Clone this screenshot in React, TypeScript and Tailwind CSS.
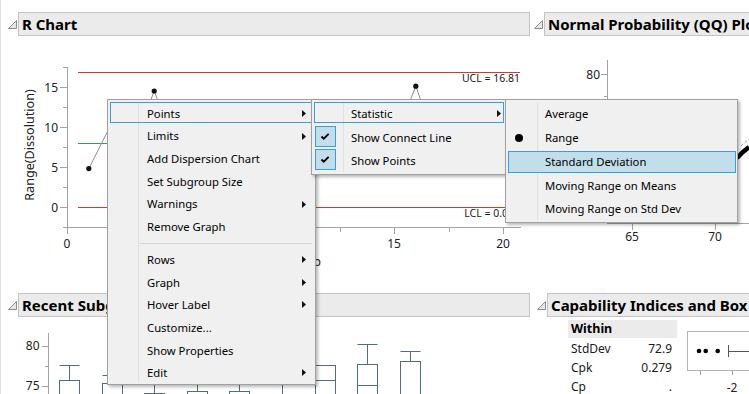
import type { ReactNode } from "react";

// ---------- shared bits ----------

function DisclosureIcon() {
  return (
    <svg width="9" height="9" viewBox="0 0 9 9" className="shrink-0">
      <path d="M0.5 8.5L8.5 0.5V8.5Z" fill="#e6e6e6" stroke="#8e8e8e" />
    </svg>
  );
}

function OutlineHeader({ title, className = "" }: { title: string; className?: string }) {
  return (
    <div className={`flex h-[24px] shrink-0 items-center gap-px ${className}`}>
      <DisclosureIcon />
      <div className="flex h-full min-w-0 flex-1 items-center overflow-hidden whitespace-nowrap border border-[#c4c4c4] bg-[#ebebeb] pl-[3px] text-[15px] font-bold leading-none text-black">
        {title}
      </div>
    </div>
  );
}

// ---------- R chart ----------

const rValues = [4.8, 10.2, 7.1, 14.5, 7.3, 9.1, 6.2, 8.6, 5.8, 7.7, 9.4, 6.5, 8.3, 7.0, 8.1, 15.1, 7.4, 9.2, 6.7, 8.4];
const rx = (i: number) => 67 + i * 21.8;
const ry = (v: number) => 207 - v * 8;

function RChart() {
  const pts = rValues.map((v, i) => [rx(i + 1), ry(v)] as const);
  return (
    <svg width="530" height="257" viewBox="0 36 530 257" className="block text-[12px]">
      <line x1="78" x2="520" y1="72.5" y2="72.5" stroke="#d3382c" />
      <line x1="78" x2="520" y1="143.5" y2="143.5" stroke="#2f9d4b" />
      <line x1="78" x2="520" y1="207.5" y2="207.5" stroke="#d3382c" />
      <text x="520" y="82" textAnchor="end" fontSize="10.5" fill="#1a1a1a">
        UCL = 16.81
      </text>
      <text x="520" y="216.5" textAnchor="end" fontSize="10.5" fill="#1a1a1a">
        LCL = 0.000
      </text>

      <g stroke="#a3a3a3">
        <line x1="67.5" x2="67.5" y1="67" y2="228" />
        <line x1="67" x2="521" y1="227.5" y2="227.5" />
        {[15, 10, 5, 0].map((v) => (
          <line key={v} x1="60" x2="67" y1={ry(v) + 0.5} y2={ry(v) + 0.5} />
        ))}
        {[17.5, 12.5, 7.5, 2.5, -2.5].map((v) => (
          <line key={v} x1="63" x2="67" y1={ry(v) + 0.5} y2={ry(v) + 0.5} />
        ))}
        {[0, 5, 10, 15, 20].map((v) => (
          <line key={v} x1={Math.round(rx(v)) + 0.5} x2={Math.round(rx(v)) + 0.5} y1="228" y2="234" />
        ))}
        {[2.5, 7.5, 12.5, 17.5].map((v) => (
          <line key={v} x1={Math.round(rx(v)) + 0.5} x2={Math.round(rx(v)) + 0.5} y1="228" y2="232" />
        ))}
      </g>

      {[15, 10, 5, 0].map((v) => (
        <text key={v} x="58" y={ry(v) + 4.5} textAnchor="end" fill="#222">
          {v}
        </text>
      ))}
      {[0, 5, 10, 15, 20].map((v) => (
        <text key={v} x={rx(v)} y="247.5" textAnchor="middle" fill="#222">
          {v}
        </text>
      ))}

      <polyline points={pts.map((p) => p.join(",")).join(" ")} fill="none" stroke="#8c8c8c" />
      {pts.map(([x, y], i) => (
        <circle key={i} cx={x} cy={y} r="2.6" fill="#111" />
      ))}

      <text transform="rotate(-90 34 145)" x="34" y="145" textAnchor="middle" fontSize="12.6" fill="#222">
        Range(Dissolution)
      </text>
      <text x="321" y="266" textAnchor="end" fontSize="12.6" fill="#222">
        Subgroup
      </text>
    </svg>
  );
}

// ---------- Normal probability plot ----------

function QQChart() {
  return (
    <svg width="219" height="257" viewBox="530 36 219 257" className="block text-[12px]">
      <g stroke="#a3a3a3">
        <line x1="607.5" x2="607.5" y1="60" y2="224" />
        <line x1="607" x2="749" y1="223.5" y2="223.5" />
        <line x1="601" x2="607" y1="74.5" y2="74.5" />
        <line x1="604" x2="607" y1="96.5" y2="96.5" />
        <line x1="632.5" x2="632.5" y1="224" y2="230" />
        <line x1="715.5" x2="715.5" y1="224" y2="230" />
      </g>
      <text x="600" y="78.5" textAnchor="end" fill="#222">
        80
      </text>
      <text x="632" y="241" textAnchor="middle" fill="#222">
        65
      </text>
      <text x="715" y="241" textAnchor="middle" fill="#222">
        70
      </text>
      <line x1="741" y1="146" x2="749" y2="139" stroke="#9a9a9a" strokeDasharray="3 2" />
      <polyline points="737,158 743,152 749,147" stroke="#000" strokeWidth="4.5" fill="none" />
    </svg>
  );
}

// ---------- Recent subgroups box plots ----------

const boxes = [
  { cap: 365.5, top: 380.5, med: 402 },
  { cap: 375.5, top: 383.5, med: 402 },
  { cap: 360.5, top: 393.5, med: 404 },
  { cap: 360.5, top: 391.5, med: 404 },
  { cap: 360.5, top: 391.5, med: 404 },
  { cap: 370.5, top: 398.5, med: 406 },
  { cap: 365.5, top: 365.5, med: 380.5 },
  { cap: 344.5, top: 364.5, med: 385.5 },
  { cap: 351.5, top: 361.5, med: 400 },
];

function RecentChart() {
  return (
    <svg width="530" height="77" viewBox="0 317 530 77" className="block text-[12px]">
      <g stroke="#a3a3a3">
        <line x1="48.5" x2="48.5" y1="333" y2="394" />
        <line x1="42" x2="48" y1="346.5" y2="346.5" />
        <line x1="45" x2="48" y1="366.5" y2="366.5" />
        <line x1="42" x2="48" y1="386.5" y2="386.5" />
      </g>
      <text x="39.5" y="350" textAnchor="end" fill="#222">
        80
      </text>
      <text x="39.5" y="390" textAnchor="end" fill="#222">
        75
      </text>
      <g stroke="#4f7079" fill="none">
        {boxes.map((b, i) => {
          const l = Math.floor(59.5 + i * 42.6) + 0.5;
          const c = l + 10;
          return (
            <g key={i}>
              <line x1={c} x2={c} y1={b.cap} y2={b.top} />
              <line x1={l} x2={l + 20} y1={b.cap} y2={b.cap} />
              <rect x={l} y={b.top} width="20" height="40" />
              <line x1={l} x2={l + 20} y1={b.med} y2={b.med} />
            </g>
          );
        })}
      </g>
    </svg>
  );
}

// ---------- Capability indices ----------

const capRows = [
  ["StdDev", "72.9"],
  ["Cpk", "0.279"],
  ["Cp", "."],
];

function CapabilityPanel() {
  return (
    <div className="mt-[3px] flex gap-[10px] pl-[38px]">
      <div className="w-[109px] shrink-0 text-[12px] leading-none">
        <div className="flex h-[18px] items-center bg-[#ebebeb] pl-[3px] text-[12.5px] font-bold">Within</div>
        <div className="mt-px">
          {capRows.map(([k, v]) => (
            <div key={k} className="flex h-[19px] items-center justify-between pl-[3px] pr-[5px] text-[#1a1a1a]">
              <span>{k}</span>
              <span>{v}</span>
            </div>
          ))}
        </div>
      </div>
      <svg width="62" height="74" viewBox="687 320 62 74" className="block shrink-0 text-[12px]">
        <rect x="687.5" y="331.5" width="80" height="39" fill="none" stroke="#b4b4b4" />
        {[699, 705.7, 717.7].map((x) => (
          <circle key={x} cx={x} cy="351" r="2.3" fill="#000" />
        ))}
        <g stroke="#555">
          <line x1="728.5" x2="728.5" y1="345" y2="357" />
          <line x1="728.5" x2="749" y1="351.5" y2="351.5" />
        </g>
        <g stroke="#a3a3a3">
          <line x1="700.5" x2="700.5" y1="371" y2="375" />
          <line x1="732.5" x2="732.5" y1="371" y2="375" />
        </g>
        <text x="732" y="392" textAnchor="middle" fill="#222">
          -2
        </text>
      </svg>
    </div>
  );
}

// ---------- context menus ----------

type MenuItem = {
  label: string;
  arrow?: boolean;
  hl?: "outline" | "fill";
  check?: boolean;
  dot?: boolean;
  sepBefore?: boolean;
};

function SubArrow({ className }: { className: string }) {
  return (
    <svg width="4" height="7" viewBox="0 0 4 7" className={`ml-auto shrink-0 ${className}`}>
      <path d="M0 0L4 3.5L0 7Z" fill="#111" />
    </svg>
  );
}

function MenuRow({ item, rowClass, arrowClass }: { item: MenuItem; rowClass: string; arrowClass: string }) {
  return (
    <div className={`relative ml-[2px] mr-[1px] flex items-center ${rowClass}`}>
      {item.hl === "outline" && <div className="absolute inset-x-0 top-0 h-[21px] border border-[#3a9fd9]" />}
      {item.hl === "fill" && (
        <div className="absolute inset-x-0 bottom-0 top-px border border-[#3a9fd9] bg-[#c3deeb]" />
      )}
      {item.check && (
        <div className="absolute left-px top-0 flex h-[21px] w-[21px] items-center justify-center border border-[#3a9fd9] bg-[#c3deeb]">
          <svg width="21" height="21" viewBox="0 0 21 21">
            <path d="M6 10.5L8.6 13L14 7.6" fill="none" stroke="#000" strokeWidth="2" />
          </svg>
        </div>
      )}
      {item.dot && <div className="absolute left-[7px] h-[8px] w-[8px] rounded-full bg-black" />}
      <span className="relative whitespace-nowrap pl-[37px]">{item.label}</span>
      {item.arrow && <SubArrow className={arrowClass} />}
    </div>
  );
}

function Menu({
  items,
  className,
  rowClass,
  arrowClass = "mr-[8px]",
  gutterClass,
}: {
  items: MenuItem[];
  className: string;
  rowClass: string;
  arrowClass?: string;
  gutterClass: string;
}) {
  const rows: ReactNode[] = [];
  items.forEach((it) => {
    if (it.sepBefore) {
      rows.push(<div key={`sep-${it.label}`} className="mb-[4px] ml-[32px] mr-[3px] mt-[5px] h-px bg-[#d6d6d6]" />);
    }
    rows.push(<MenuRow key={it.label} item={it} rowClass={rowClass} arrowClass={arrowClass} />);
  });
  return (
    <div
      className={`absolute top-[99px] border border-[#a0a0a0] bg-[#f0f0f0] pt-[2px] text-[11.3px] leading-none text-black shadow-[2px_2px_3px_rgba(0,0,0,0.28)] ${className}`}
    >
      <div className={`absolute bottom-[2px] top-[2px] w-px bg-[#e0e0e0] ${gutterClass}`} />
      {rows}
    </div>
  );
}

const mainItems: MenuItem[] = [
  { label: "Points", arrow: true, hl: "outline" },
  { label: "Limits", arrow: true },
  { label: "Add Dispersion Chart" },
  { label: "Set Subgroup Size" },
  { label: "Warnings", arrow: true },
  { label: "Remove Graph" },
  { label: "Rows", arrow: true, sepBefore: true },
  { label: "Graph", arrow: true },
  { label: "Hover Label", arrow: true },
  { label: "Customize..." },
  { label: "Show Properties" },
  { label: "Edit", arrow: true },
];

const pointsItems: MenuItem[] = [
  { label: "Statistic", arrow: true, hl: "outline" },
  { label: "Show Connect Line", check: true },
  { label: "Show Points", check: true },
];

const statItems: MenuItem[] = [
  { label: "Average" },
  { label: "Range", dot: true },
  { label: "Standard Deviation", hl: "fill" },
  { label: "Moving Range on Means" },
  { label: "Moving Range on Std Dev" },
];

// ---------- page ----------

export default function App() {
  return (
    <div className="relative grid h-[394px] w-[749px] grid-cols-[530px_219px] grid-rows-[281px_101px] overflow-hidden bg-white pt-[12px] font-['Noto_Sans',sans-serif] text-black shadow-[inset_1px_0_0_#e1e1e1]">
      <div className="flex min-w-0 flex-col">
        <OutlineHeader title="R Chart" className="pl-[8px]" />
        <RChart />
      </div>
      <div className="flex min-w-0 flex-col">
        <OutlineHeader title="Normal Probability (QQ) Plot" className="-mr-[20px] pl-[4px]" />
        <QQChart />
      </div>
      <div className="flex min-w-0 flex-col">
        <OutlineHeader title="Recent Subgroups" className="pl-[8px]" />
        <RecentChart />
      </div>
      <div className="flex min-w-0 flex-col">
        <OutlineHeader title="Capability Indices and Box Plots" className="-mr-[20px] pl-[7px]" />
        <CapabilityPanel />
      </div>

      <Menu
        items={mainItems}
        className="left-[107px] z-10 w-[209px]"
        rowClass="h-[22.7px]"
        arrowClass="mr-[8px]"
        gutterClass="left-[30px]"
      />
      <Menu
        items={pointsItems}
        className="left-[311px] z-20 w-[195px] pb-px"
        rowClass="h-[23.5px]"
        arrowClass="mr-[3px]"
        gutterClass="left-[31px]"
      />
      <Menu
        items={statItems}
        className="left-[505px] z-30 w-[233px] pb-[1px]"
        rowClass="h-[23.8px]"
        gutterClass="left-[31px]"
      />
    </div>
  );
}
